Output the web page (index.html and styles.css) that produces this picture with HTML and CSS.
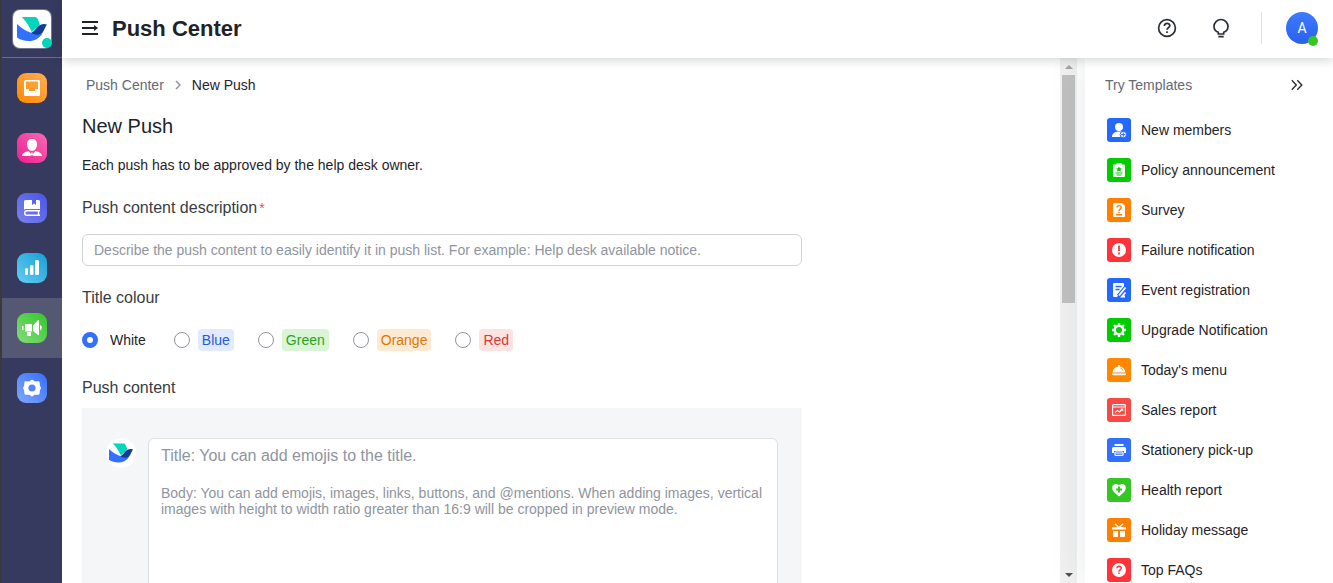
FILE: index.html
```html
<!DOCTYPE html>
<html lang="en">
<head>
    <meta charset="UTF-8">
    <meta name="viewport" content="width=device-width, initial-scale=1.0">
    <title>Push Center</title>
    <link rel="stylesheet" href="styles.css">
</head>
<body>
    <svg width="0" height="0" class="defs" aria-hidden="true">
        <defs>
            <symbol id="bird" viewBox="0 0 30 24">
                <path d="M4.700 0h13.300c1.200 0 1.900.5 2.500 1.700 1 1.900 1.800 3.800 2.300 6L14.800 15C12.500 9.500 9 4 4.700 0z" fill="#00d6b9"/>
                <path d="M0 7c4 4 9 7 14 8.800 4 1.400 8 1.600 11.500.7C22 21.500 17.500 24 12 24 7 24 3 22.700 0 20.500z" fill="#3370ff"/>
                <path d="M30 7.500c-1.700 2.200-2.500 5-4 7.500-2 3.200-6.500 3.800-12 1 3-1.500 4.500-4 7-6.500 2.300-2.400 5.500-3.200 9-2z" fill="#133c9a"/>
            </symbol>
            <linearGradient id="orange" x1="1" y1="0" x2="0" y2="1"><stop stop-color="#ffb056"/><stop offset="1" stop-color="#ff8800"/></linearGradient>
            <linearGradient id="pink" x1="1" y1="0" x2="0" y2="1"><stop stop-color="#f76bb2"/><stop offset="1" stop-color="#ee1d93"/></linearGradient>
            <linearGradient id="indigo" x1="1" y1="0" x2="0" y2="1"><stop stop-color="#4954e6"/><stop offset="1" stop-color="#7b84ea"/></linearGradient>
            <linearGradient id="cyan" x1="1" y1="0" x2="0" y2="1"><stop stop-color="#169fd8"/><stop offset="1" stop-color="#67cdf0"/></linearGradient>
            <linearGradient id="green" x1="1" y1="0" x2="0" y2="1"><stop stop-color="#32c728"/><stop offset="1" stop-color="#85dc7d"/></linearGradient>
            <linearGradient id="blue" x1="1" y1="0" x2="0" y2="1"><stop stop-color="#3370ff"/><stop offset="1" stop-color="#82a7fc"/></linearGradient>
        </defs>
    </svg>
    <nav class="sidebar">
        <a href="#" class="logo" aria-label="Home">
            <svg width="30" height="24"><use href="#bird"/></svg>
            <span class="logo-dot"></span>
        </a>
        <a href="#" class="nav-item" aria-label="Inbox">
            <svg width="30" height="30" viewBox="0 0 30 30"><rect width="30" height="30" rx="9" fill="url(#orange)"/><path fill="#fff" fill-rule="evenodd" d="M8.500 7h13A1.500 1.500 0 0 1 23 8.500v13a1.500 1.500 0 0 1-1.500 1.500h-13A1.500 1.500 0 0 1 7 21.500v-13A1.500 1.500 0 0 1 8.500 7zM9 8.500V16h3v2h6v-2h3V8.500z"/></svg>
        </a>
        <a href="#" class="nav-item" aria-label="Agents">
            <svg width="30" height="30" viewBox="0 0 30 30"><rect width="30" height="30" rx="9" fill="url(#pink)"/><path fill="#fff" d="M15 6c3 0 5 2 5 5 0 4-2 7-5 7s-5-3-5-7c0-3 2-5 5-5zM5 23c0-2.500 3-4 6.500-5l2.800 3-.8 2zM25 23c0-2.500-3-4-6.500-5l-2.800 3 .8 2zM15 19l1.200 2-1.200 2-1.200-2z"/></svg>
        </a>
        <a href="#" class="nav-item" aria-label="Knowledge base">
            <svg width="30" height="30" viewBox="0 0 30 30"><rect width="30" height="30" rx="9" fill="url(#indigo)"/><path fill="#fff" d="M8.500 7H15v5l2-1.500 2 1.500V7h2.500A1.500 1.500 0 0 1 23 8.500V16H9.500c-1 0-2 .3-2.500.8V8.500A1.500 1.500 0 0 1 8.500 7z"/><path fill="none" stroke="#fff" stroke-width="1.400" d="M23 17.700H10a2.300 2.300 0 0 0 0 4.600h13M21.500 18v4"/></svg>
        </a>
        <a href="#" class="nav-item" aria-label="Statistics">
            <svg width="30" height="30" viewBox="0 0 30 30"><rect width="30" height="30" rx="9" fill="url(#cyan)"/><g fill="#fff"><rect x="8" y="15" width="3" height="7" rx="1.500"/><rect x="13" y="12" width="3.500" height="10" rx="1.500"/><rect x="18" y="7" width="4" height="15" rx="1.500"/></g></svg>
        </a>
        <a href="#" class="nav-item active" aria-label="Push Center">
            <svg width="30" height="30" viewBox="0 0 30 30"><rect width="30" height="30" rx="9" fill="url(#green)"/><path fill="#fff" d="M8 11h7v7.500H8zM10 19h4v4h-4zM16 12.500L21 7h1v15h-1l-5-4zM5 13h1.500v4H5zM23 12c2.500 1 2.500 4.500 0 5.500z"/></svg>
        </a>
        <a href="#" class="nav-item" aria-label="Settings">
            <svg width="30" height="30" viewBox="0 0 30 30"><rect width="30" height="30" rx="9" fill="url(#blue)"/><path fill="#fff" stroke="#fff" stroke-width="3" stroke-linejoin="round" d="M15 8.300l2.200 1.700 4-.2.200 3.200 1 2-1 2-.2 3.200-4-.2-2.200 1.700-2.200-1.700-4 .2-.2-3.200-1-2 1-2 .2-3.200 4 .2z"/><circle cx="15" cy="15" r="3.600" fill="#5485ff"/></svg>
        </a>
    </nav>
    <div class="page">
        <header class="topbar">
            <button class="icon-btn" aria-label="Toggle menu">
                <svg width="16" height="16" viewBox="0 0 16 16"><path d="M0 2h16M0 8h13M0 14h16" stroke="#1f2329" stroke-width="1.800"/><path d="M12 5l4 3-4 3z" fill="#1f2329"/></svg>
            </button>
            <span class="topbar-title">Push Center</span>
            <div class="topbar-actions">
                <button class="icon-btn" aria-label="Help">
                    <svg width="20" height="20" viewBox="0 0 20 20" fill="none" stroke="#2b2f36" stroke-width="1.700"><circle cx="10" cy="10" r="8.400"/><path d="M7.400 8c0-3.600 5.400-3.400 5.400-.2 0 1.900-2.800 1.900-2.800 4M10 13.200V15"/></svg>
                </button>
                <button class="icon-btn" aria-label="Tips">
                    <svg width="20" height="20" viewBox="0 0 20 20" fill="none" stroke="#2b2f36" stroke-width="1.700"><path d="M7.300 16v-1.700C4.800 13.300 3 11.200 3 8.500a7 7 0 0 1 14 0c0 2.700-1.800 4.800-4.300 5.800V16zM7.300 18.600h5.400"/></svg>
                </button>
                <span class="divider"></span>
                <button class="avatar" aria-label="Account">A<span class="avatar-dot"></span></button>
            </div>
        </header>
        <div class="body">
            <main class="content">
                <nav class="breadcrumb">
                    <a href="#">Push Center</a>
                    <svg width="6" height="10" viewBox="0 0 6 10"><path d="M1 1l4 4-4 4" fill="none" stroke="#8f959e" stroke-width="1.500"/></svg>
                    <span>New Push</span>
                </nav>
                <h1>New Push</h1>
                <p class="intro">Each push has to be approved by the help desk owner.</p>
                <form class="push-form">
                    <label class="field-label" for="description">Push content description<span class="required">*</span></label>
                    <input class="text-input" id="description" type="text" placeholder="Describe the push content to easily identify it in push list. For example: Help desk available notice.">
                    <div class="field-label" id="colour-label">Title colour</div>
                    <div class="radio-row" role="radiogroup" aria-labelledby="colour-label">
                        <label><input type="radio" name="colour" checked><span class="tag">White</span></label>
                        <label><input type="radio" name="colour"><span class="tag tag-blue">Blue</span></label>
                        <label><input type="radio" name="colour"><span class="tag tag-green">Green</span></label>
                        <label><input type="radio" name="colour"><span class="tag tag-orange">Orange</span></label>
                        <label><input type="radio" name="colour"><span class="tag tag-red">Red</span></label>
                    </div>
                    <div class="field-label editor-label">Push content</div>
                    <div class="editor">
                        <span class="bot-avatar"><svg width="24" height="20"><use href="#bird"/></svg></span>
                        <div class="editor-card">
                            <input class="editor-title" type="text" aria-label="Title" placeholder="Title: You can add emojis to the title.">
                            <textarea class="editor-body" aria-label="Body" placeholder="Body: You can add emojis, images, links, buttons, and @mentions. When adding images, vertical images with height to width ratio greater than 16:9 will be cropped in preview mode."></textarea>
                        </div>
                    </div>
                </form>
            </main>
            <div class="scrollbar" aria-hidden="true">
                <span class="arrow arrow-up"></span>
                <span class="track"><span class="thumb"></span></span>
                <span class="arrow arrow-down"></span>
            </div>
            <aside class="templates">
                <div class="templates-head">
                    <span>Try Templates</span>
                    <button class="icon-btn" aria-label="Collapse">
                        <svg width="12" height="12" viewBox="0 0 12 12"><path d="M.8 1.200L5.300 6 .8 10.800M6.300 1.200L10.800 6l-4.500 4.800" fill="none" stroke="#2b2f36" stroke-width="1.400"/></svg>
                    </button>
                </div>
                <button class="template">
                    <svg width="24" height="24" viewBox="0 0 24 24"><rect width="24" height="24" rx="3" fill="#2468ff"/><g fill="#fff"><circle cx="12" cy="9" r="4"/><path d="M5 19c0-3.500 2.500-5 6-5.500h3l1 1-1 4.500z"/><circle cx="16.300" cy="16.600" r="3.200" stroke="#2468ff"/></g><path d="M16.300 14.500v4.200M14.200 16.600h4.200" stroke="#2468ff"/></svg>
                    New members
                </button>
                <button class="template">
                    <svg width="24" height="24" viewBox="0 0 24 24"><rect width="24" height="24" rx="3" fill="#00cc00"/><path fill="#fff" d="M7 6.500h2.500V5h5v1.500H17a1 1 0 0 1 1 1V18a1 1 0 0 1-1 1H7a1 1 0 0 1-1-1V7.500a1 1 0 0 1 1-1z"/><path fill="#00cc00" d="M12 8.500l1 1.700 2 .3-1.500 1.300.4 1.900-1.900-.9-1.900.9.400-1.900L9 10.500l2-.3zM8.500 14.500h7v1h-7zM9.500 16.500h5v1h-5z"/></svg>
                    Policy announcement
                </button>
                <button class="template">
                    <svg width="24" height="24" viewBox="0 0 24 24"><rect width="24" height="24" rx="3" fill="#ff8000"/><path fill="#fff" d="M7 5h8l3 3v10a1 1 0 0 1-1 1H7a1 1 0 0 1-1-1V6a1 1 0 0 1 1-1z"/><path fill="none" stroke="#ff8000" stroke-width="1.400" d="M10 9.500c0-2.500 4.200-2.500 4.200 0 0 1.700-2.200 1.500-2.200 3.500M12 13.800v1.400M9 16.700h6"/></svg>
                    Survey
                </button>
                <button class="template">
                    <svg width="24" height="24" viewBox="0 0 24 24"><rect width="24" height="24" rx="3" fill="#ff343b"/><circle cx="12" cy="12" r="7" fill="#fff"/><path d="M12 7.500v5.500M12 14.500v2" stroke="#ff343b" stroke-width="1.800"/></svg>
                    Failure notification
                </button>
                <button class="template">
                    <svg width="24" height="24" viewBox="0 0 24 24"><rect width="24" height="24" rx="3" fill="#2468ff"/><path fill="#fff" d="M7 5h9a1 1 0 0 1 1 1v3l-7 10H7a1 1 0 0 1-1-1V6a1 1 0 0 1 1-1z"/><path d="M8.500 8.500h6M8.500 11.500h4" stroke="#2468ff" stroke-width="1.300"/><path d="M18.500 9.500l-7 8.500" stroke="#2468ff" stroke-width="4"/><path d="M18.500 9.500l-6.500 8M18.500 14.500l-3.500 4h3" stroke="#fff" stroke-width="1.800" fill="none"/></svg>
                    Event registration
                </button>
                <button class="template">
                    <svg width="24" height="24" viewBox="0 0 24 24"><rect width="24" height="24" rx="3" fill="#00cc00"/><circle cx="12" cy="12" r="4.200" fill="none" stroke="#fff" stroke-width="2.400"/><path d="M12 5v2.500M12 16.500V19M5 12h2.500M16.500 12H19M7 7l1.800 1.800M15.200 15.200L17 17M7 17l1.800-1.800M15.200 8.800L17 7" stroke="#fff" stroke-width="2.400"/></svg>
                    Upgrade Notification
                </button>
                <button class="template">
                    <svg width="24" height="24" viewBox="0 0 24 24"><rect width="24" height="24" rx="3" fill="#ff8800"/><path fill="#fff" d="M5.500 14.500c.3-3.500 2.500-5.500 5.500-6V7h2v1.500c3 .5 5.200 2.500 5.500 6zM5 15.500h14c0 1.200-.5 1.700-1.500 1.700h-11c-1 0-1.500-.5-1.500-1.700z"/><path d="M13.500 10.200c1.300.4 2 1.200 2.400 2.300" fill="none" stroke="#ff8800"/></svg>
                    Today's menu
                </button>
                <button class="template">
                    <svg width="24" height="24" viewBox="0 0 24 24"><rect width="24" height="24" rx="3" fill="#f54a45"/><rect x="5.600" y="6.600" width="12.800" height="10.800" rx="1" fill="none" stroke="#fff" stroke-width="1.200"/><path d="M6 9h12M8 14.500l2.500-2 2 1.500 3-3M13.700 11h2v2" fill="none" stroke="#fff" stroke-width="1.100"/></svg>
                    Sales report
                </button>
                <button class="template">
                    <svg width="24" height="24" viewBox="0 0 24 24"><rect width="24" height="24" rx="3" fill="#3370ff"/><path fill="#fff" d="M7.500 6h9v2h-9zM6.500 9h11A1.500 1.500 0 0 1 19 10.500V15h-2v-2H7v2H5v-4.500A1.500 1.500 0 0 1 6.500 9z"/><rect x="8" y="14" width="8" height="3.500" rx="1" fill="none" stroke="#fff" stroke-width="1.200"/><path d="M9 15.800h6" stroke="#fff" stroke-width=".8"/></svg>
                    Stationery pick-up
                </button>
                <button class="template">
                    <svg width="24" height="24" viewBox="0 0 24 24"><rect width="24" height="24" rx="3" fill="#34c724"/><path fill="#fff" d="M12 7.500C13.500 5.500 18.800 5 18.800 10c0 3.500-4.300 6.500-6.800 8.500-2.500-2-6.800-5-6.800-8.500 0-5 5.300-4.500 6.800-2.500z"/><path d="M12 8.500v6M9 11.500h6" stroke="#34c724" stroke-width="2"/></svg>
                    Health report
                </button>
                <button class="template">
                    <svg width="24" height="24" viewBox="0 0 24 24"><rect width="24" height="24" rx="3" fill="#ff8000"/><path fill="#fff" d="M5 9h14v2.500H5zM6 13h5v6H7a1 1 0 0 1-1-1zM13 13h5v5a1 1 0 0 1-1 1h-4z"/><path d="M8 6l3.500 3M16 6l-3.500 3" stroke="#fff" stroke-width="1.500"/></svg>
                    Holiday message
                </button>
                <button class="template">
                    <svg width="24" height="24" viewBox="0 0 24 24"><rect width="24" height="24" rx="3" fill="#ff343b"/><circle cx="12" cy="12" r="7" fill="#fff"/><path fill="none" stroke="#ff343b" stroke-width="1.400" d="M10 10.300c0-2.700 4.200-2.700 4.200 0 0 1.700-2.200 1.500-2.200 3.400M12 14.600V16"/></svg>
                    Top FAQs
                </button>
            </aside>
        </div>
    </div>
</body>
</html>
```
FILE: styles.css
```css
* {
    box-sizing: border-box;
}
body {
    display: flex;
    height: 100vh;
    margin: 0;
    overflow: hidden;
    font-family: "Liberation Sans", Arial, sans-serif;
    font-size: 14px;
    line-height: 22px;
    color: #1f2329;
    background-color: #fff;
}
button, input, textarea {
    font-family: inherit;
    font-size: 14px;
    color: inherit;
}
svg {
    display: block;
    flex-shrink: 0;
}
.defs {
    position: absolute;
}
.sidebar {
    width: 62px;
    flex-shrink: 0;
    border-left: 2px solid #3a3a3c;
    background-color: #363a5e;
}
.logo {
    display: flex;
    align-items: center;
    justify-content: center;
    position: relative;
    height: 58px;
    border-bottom: 1px solid #6b6e85;
}
.logo::before {
    content: "";
    position: absolute;
    width: 38px;
    height: 38px;
    border-radius: 7px;
    background-color: #fff;
    box-shadow: 0 0 0 1px rgba(255, 255, 255, 0.3);
}
.logo svg {
    position: relative;
}
.logo-dot {
    position: absolute;
    right: 10px;
    bottom: 9px;
    width: 10px;
    height: 10px;
    border-radius: 50%;
    background-color: #00d6b9;
}
.nav-item {
    display: flex;
    align-items: center;
    justify-content: center;
    height: 60px;
}
.nav-item.active {
    background-color: #555872;
}
.page {
    display: flex;
    flex-direction: column;
    flex: 1;
    min-width: 0;
}
.topbar {
    display: flex;
    align-items: center;
    position: relative;
    z-index: 2;
    height: 58px;
    flex-shrink: 0;
    padding: 0 15px 2px 20px;
    background-color: #fff;
    box-shadow: 0 2px 10px rgba(31, 35, 41, 0.2);
}
.icon-btn {
    padding: 0;
    border: none;
    background: none;
    cursor: pointer;
}
.topbar-title {
    margin-left: 14px;
    padding-top: 2px;
    font-size: 22px;
    font-weight: bold;
}
.topbar-actions {
    display: flex;
    align-items: center;
    gap: 34px;
    margin-left: auto;
}
.divider {
    width: 1px;
    height: 32px;
    margin-left: -4px;
    margin-right: -10px;
    background-color: #dee0e3;
}
.avatar {
    position: relative;
    width: 32px;
    height: 32px;
    padding: 0;
    border: none;
    border-radius: 50%;
    font-family: Roboto, "Liberation Sans", sans-serif;
    color: #fff;
    background: linear-gradient(#3d7bff, #2a60ec);
}
.avatar-dot {
    position: absolute;
    right: 0;
    bottom: -2px;
    width: 10px;
    height: 10px;
    border-radius: 50%;
    background-color: #34c724;
}
.body {
    display: flex;
    flex: 1;
    min-height: 0;
}
.content {
    flex: 1;
    min-width: 0;
    overflow: hidden;
    padding: 16px 20px 0;
}
.breadcrumb {
    display: flex;
    align-items: center;
    gap: 11px;
    padding-left: 4px;
}
.breadcrumb a {
    color: #646a73;
    text-decoration: none;
}
h1 {
    margin: 16px 0 14px;
    font-size: 20px;
    font-weight: normal;
    line-height: 28px;
}
.intro {
    margin: 0;
}
.push-form {
    max-width: 720px;
}
.field-label {
    display: block;
    margin: 20px 0 14px;
    font-size: 16px;
    line-height: 24px;
    color: #373c43;
}
.required {
    margin-left: 2px;
    font-size: 14px;
    color: #f54a45;
}
.text-input {
    display: block;
    width: 100%;
    height: 32px;
    padding: 0 11px;
    border: 1px solid #d0d3d6;
    border-radius: 6px;
}
::placeholder {
    color: #8f959e;
    opacity: 1;
}
.radio-row {
    display: flex;
    gap: 24px;
    padding-top: 5px;
}
.radio-row label {
    display: flex;
    align-items: center;
    gap: 8px;
}
.radio-row input {
    appearance: none;
    width: 16px;
    height: 16px;
    margin: 0;
    border: 1px solid #8f959e;
    border-radius: 50%;
    background-color: #fff;
}
.radio-row input:checked {
    border: 5px solid #3370ff;
}
.tag {
    padding: 0 4px;
    border-radius: 4px;
}
.tag-blue {
    color: #245bdb;
    background-color: #e1eaff;
}
.tag-green {
    color: #2ea121;
    background-color: #d9f5d6;
}
.tag-orange {
    color: #de7802;
    background-color: #feead2;
}
.tag-red {
    color: #d83931;
    background-color: #fde2e2;
}
.editor-label {
    margin: 25px 0 8px;
}
.editor {
    display: flex;
    gap: 12px;
    padding: 30px 24px;
    background-color: #f5f6f7;
}
.bot-avatar {
    display: flex;
    align-items: center;
    justify-content: center;
    width: 30px;
    height: 30px;
    border-radius: 50%;
    background-color: #fff;
}
.editor-card {
    display: flex;
    flex-direction: column;
    flex: 1;
    padding: 6px 12px;
    border: 1px solid #dee0e3;
    border-radius: 6px;
    background-color: #fff;
}
.editor-title {
    height: 22px;
    padding: 0;
    border: none;
    font-size: 16px;
}
.editor-body {
    height: 240px;
    margin-top: 18px;
    padding: 0;
    border: none;
    line-height: 16px;
    resize: none;
}
.scrollbar {
    display: flex;
    flex-direction: column;
    width: 17px;
    margin-right: 8px;
    background-color: #f1f1f1;
}
.arrow {
    display: flex;
    align-items: center;
    justify-content: center;
    height: 17px;
}
.arrow::before {
    content: "";
    border: 4px solid transparent;
}
.arrow-up::before {
    border-top: none;
    border-bottom-color: #a3a3a3;
}
.arrow-down::before {
    border-bottom: none;
    border-top-color: #505050;
}
.track {
    flex: 1;
    padding: 0 2px;
}
.thumb {
    display: block;
    height: 46.5%;
    background-color: #c1c1c1;
}
.templates {
    position: relative;
    width: 248px;
    flex-shrink: 0;
    padding: 16px 22px 0;
    background-color: #fff;
    box-shadow: -6px 0 32px rgba(31, 35, 60, 0.08);
}
.templates-head {
    display: flex;
    align-items: center;
    justify-content: space-between;
    margin: 0 8px 14px -2px;
    color: #646a73;
}
.template {
    display: flex;
    align-items: center;
    gap: 10px;
    width: 100%;
    height: 40px;
    padding: 0;
    border: none;
    background: none;
    text-align: left;
    cursor: pointer;
}
```
